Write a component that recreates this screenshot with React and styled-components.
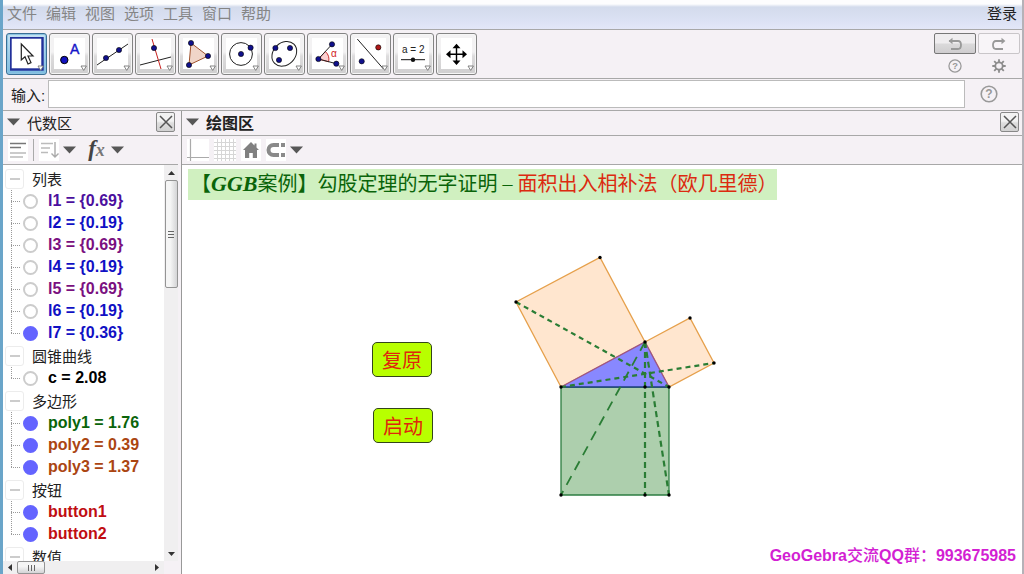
import React, { useCallback, useState } from "react";
import styled, { createGlobalStyle } from "styled-components";

const MENUS = ["文件", "编辑", "视图", "选项", "工具", "窗口", "帮助"];

const GROUPS = [
  {
    title: "列表",
    items: [
      { id: "l1", text: "l1 = {0.69}", color: "#4b0f9e", shown: false },
      { id: "l2", text: "l2 = {0.19}", color: "#1010c4", shown: false },
      { id: "l3", text: "l3 = {0.69}", color: "#7a1080", shown: false },
      { id: "l4", text: "l4 = {0.19}", color: "#1010c4", shown: false },
      { id: "l5", text: "l5 = {0.69}", color: "#7a1080", shown: false },
      { id: "l6", text: "l6 = {0.19}", color: "#1010c4", shown: false },
      { id: "l7", text: "l7 = {0.36}", color: "#1010c4", shown: true },
    ],
  },
  {
    title: "圆锥曲线",
    items: [{ id: "c", text: "c = 2.08", color: "#000000", shown: false }],
  },
  {
    title: "多边形",
    items: [
      { id: "poly1", text: "poly1 = 1.76", color: "#0a640a", shown: true },
      { id: "poly2", text: "poly2 = 0.39", color: "#ab4512", shown: true },
      { id: "poly3", text: "poly3 = 1.37", color: "#ab4512", shown: true },
    ],
  },
  {
    title: "按钮",
    items: [
      { id: "button1", text: "button1", color: "#c00d12", shown: true },
      { id: "button2", text: "button2", color: "#c00d12", shown: true },
    ],
  },
  { title: "数值", items: [] },
];

const Dot = ({ x, y, fill = "#10108c" }) => (
  <circle cx={x} cy={y} r="2.6" fill={fill} stroke="#000" strokeWidth="0.6" />
);

const TOOLS = [
  {
    name: "移动",
    icon: (
      <path
        d="M10.3 6V22L14 18.7L17 26L20 24.6L17 18H22Z"
        fill="#fff"
        stroke="#222"
        strokeWidth="1.2"
      />
    ),
  },
  {
    name: "描点",
    icon: (
      <>
        <circle cx="10.3" cy="22" r="3.7" fill="#1212c0" stroke="#000" />
        <text x="16" y="16" fontSize="14" fill="#1414c8" stroke="#1414c8" strokeWidth="0.4">
          A
        </text>
      </>
    ),
  },
  {
    name: "直线",
    icon: (
      <>
        <path d="M0 27L31 6" stroke="#222" />
        <Dot x={9} y={20} />
        <Dot x={22} y={12} />
      </>
    ),
  },
  {
    name: "垂线",
    icon: (
      <>
        <path d="M0 27L31 19" stroke="#222" />
        <path d="M12 1L21 31" stroke="#c8201e" />
        <Dot x={14} y={10} />
      </>
    ),
  },
  {
    name: "多边形",
    icon: (
      <>
        <path d="M8 5L25 18L6 27Z" fill="#f0d5c8" stroke="#a0522d" />
        <Dot x={8} y={5} />
        <Dot x={25} y={18} />
        <Dot x={6} y={27} />
      </>
    ),
  },
  {
    name: "圆",
    icon: (
      <>
        <circle cx="15" cy="16" r="11.4" fill="none" stroke="#222" />
        <Dot x={15} y={16} />
        <Dot x={24.6} y={9.7} />
      </>
    ),
  },
  {
    name: "椭圆",
    icon: (
      <>
        <ellipse
          cx="15.3"
          cy="15.8"
          rx="13.6"
          ry="11"
          transform="rotate(-45 15.3 15.8)"
          fill="none"
          stroke="#222"
        />
        <Dot x={6.4} y={10} />
        <Dot x={21} y={10} />
        <Dot x={10} y={22} />
      </>
    ),
  },
  {
    name: "角度",
    icon: (
      <>
        <path d="M6.4 21L13.4 13.6A10.5 10.5 0 0 1 16.6 23.8Z" fill="#fbd0d0" stroke="#d03030" />
        <path d="M20 6.3L6.4 21L24.3 25.7" fill="none" stroke="#222" />
        <Dot x={20} y={6.3} />
        <Dot x={6.4} y={21} />
        <Dot x={24.3} y={25.7} />
        <text x="19" y="19" fontSize="10" fill="#d02020">
          α
        </text>
      </>
    ),
  },
  {
    name: "对称",
    icon: (
      <>
        <path d="M2.3 1L28.5 31" stroke="#222" />
        <Dot x={23.3} y={9.4} fill="#b01818" />
        <Dot x={6.7} y={23.3} />
      </>
    ),
  },
  {
    name: "滑动条",
    icon: (
      <>
        <text x="4" y="15" fontSize="10" fill="#222">
          a = 2
        </text>
        <path d="M3 21.7H27" stroke="#111" />
        <circle cx="15" cy="21.7" r="2.2" fill="#111" />
      </>
    ),
  },
  {
    name: "移动视图",
    icon: (
      <>
        <path d="M7 16.3H24M15.5 8V25" stroke="#000" strokeWidth="1.4" />
        <path
          d="M5 16.3L9.5 12.3V20.3ZM26 16.3L21.5 12.3V20.3ZM15.5 5.8L11.5 10.3H19.5ZM15.5 27L11.5 22.5H19.5Z"
          fill="#000"
        />
      </>
    ),
  },
];

const POINTS = [
  [561, 387],
  [669, 387],
  [645, 342],
  [561, 495],
  [669, 495],
  [516, 302],
  [600, 257.5],
  [690, 318],
  [714, 363],
  [645, 387],
  [645, 495],
];

const CloseButton = () => (
  <Close aria-label="关闭">
    <svg width="14" height="14" viewBox="0 0 14 14">
      <path d="M1 1L13 13M13 1L1 13" stroke="#555" strokeWidth="1.5" />
    </svg>
  </Close>
);

const Caret = () => (
  <svg width="13" height="8" viewBox="0 0 13 8">
    <path d="M0 0.5H13L6.5 7.5Z" fill="#575757" />
  </svg>
);

const HelpIcon = ({ size }) => (
  <svg width={size} height={size} viewBox="0 0 18 18">
    <circle cx="9" cy="9" r="7.8" fill="none" stroke="#999" strokeWidth="1.6" />
    <text x="9" y="13" textAnchor="middle" fontSize="12" fontWeight="bold" fill="#999">
      ?
    </text>
  </svg>
);

const GearIcon = () => (
  <svg width="14" height="14" viewBox="0 0 14 14">
    <g stroke="#8c8c8c" strokeWidth="1.8" fill="none">
      <circle cx="7" cy="7" r="3.7" />
      <path d="M7 0.3V3M7 11V13.7M0.3 7H3M11 7H13.7M2.2 2.2L4.2 4.2M9.8 9.8L11.8 11.8M11.8 2.2L9.8 4.2M4.2 9.8L2.2 11.8" />
    </g>
  </svg>
);

const Construction = () => (
  <Figure viewBox="510 252 210 250" width="210" height="250">
    <path d="M561 387L516 302L600 257.5L645 342Z" fill="#ffe6cf" stroke="#e6a04b" strokeWidth="1.3" />
    <path d="M645 342L690 318L714 363L669 387Z" fill="#ffe6cf" stroke="#e6a04b" strokeWidth="1.3" />
    <path d="M561 387H669V495H561Z" fill="#adcfad" stroke="#2d7d41" strokeWidth="1.3" />
    <path d="M561 387L645 342L669 387Z" fill="#8888ff" />
    <path d="M561 387L645 342L669 387" fill="none" stroke="#9b5488" strokeWidth="1.3" />
    <path d="M561 387H669" stroke="#1c3f7c" strokeWidth="1.3" />
    <g stroke="#2a7d35" strokeWidth="2.2" fill="none">
      <path d="M516 302L669 387" strokeDasharray="5 4" />
      <path d="M561 387L714 363" strokeDasharray="5 4" />
      <path d="M645 342V495" strokeDasharray="6 4" />
      <path d="M645 342L669 495" strokeDasharray="6 4" />
      <path d="M645 342L561 495" strokeDasharray="10 7" strokeWidth="1.8" />
    </g>
    {POINTS.map(([x, y]) => (
      <circle key={`${x}-${y}`} cx={x} cy={y} r="1.7" fill="#000" />
    ))}
  </Figure>
);

const App = () => {
  const [tool, setTool] = useState(TOOLS[0].name);
  const [command, setCommand] = useState("");
  const [shown, setShown] = useState(() =>
    Object.fromEntries(GROUPS.flatMap((g) => g.items.map((i) => [i.id, i.shown])))
  );

  const onToggle = useCallback((id) => {
    setShown((prev) => ({ ...prev, [id]: !prev[id] }));
  }, []);

  return (
    <>
      <GlobalStyle />
      <Window>
        <MenuBar>
          {MENUS.map((menu) => (
            <MenuButton key={menu}>{menu}</MenuButton>
          ))}
          <LoginButton>登录</LoginButton>
        </MenuBar>

        <ToolBar>
          <Tools>
            {TOOLS.map(({ name, icon }) => (
              <ToolButton
                key={name}
                aria-label={name}
                $active={tool === name}
                onClick={() => setTool(name)}
              >
                <svg width="34" height="34" viewBox="-1 -1 34 34">
                  <rect
                    x={tool === name ? -0.5 : 0}
                    y={tool === name ? -0.5 : 0}
                    width={tool === name ? 32 : 31}
                    height={tool === name ? 32 : 31}
                    fill="#fff"
                    stroke={tool === name ? "#22309a" : "none"}
                    strokeWidth="2.4"
                  />
                  {icon}
                  <path d="M27 28H32.4L29.7 32.4Z" fill="#fff" stroke="#777" strokeWidth="0.9" />
                </svg>
              </ToolButton>
            ))}
          </Tools>
          <Actions>
            <ActionButton aria-label="撤销">
              <svg width="14" height="14" viewBox="0 0 14 14" fill="none">
                <path d="M1 4H10Q13 4 13 8T10 12H3" stroke="#999" strokeWidth="1.8" />
                <path d="M4.5 0.8L0.6 4L4.5 7.2Z" fill="#999" />
              </svg>
            </ActionButton>
            <ActionButton aria-label="重做" $plain>
              <svg width="14" height="14" viewBox="0 0 14 14" fill="none">
                <path d="M12 4H4Q1 4 1 8T4 12H11" stroke="#999" strokeWidth="1.8" />
                <path d="M9.5 0.8L13.4 4L9.5 7.2Z" fill="#999" />
              </svg>
            </ActionButton>
            <IconButton aria-label="帮助">
              <HelpIcon size={14} />
            </IconButton>
            <IconButton aria-label="设置">
              <GearIcon />
            </IconButton>
          </Actions>
        </ToolBar>

        <InputBar>
          <label htmlFor="command">输入:</label>
          <CommandInput
            id="command"
            value={command}
            onChange={(e) => setCommand(e.target.value)}
          />
          <IconButton aria-label="输入帮助">
            <HelpIcon size={18} />
          </IconButton>
        </InputBar>

        <Panels>
          <AlgebraPanel>
            <PanelHeader>
              <Caret />
              <PanelTitle>代数区</PanelTitle>
              <CloseButton />
            </PanelHeader>
            <StyleBar>
              <StyleButton aria-label="辅助对象">
                <svg width="20" height="22" viewBox="0 0 20 22">
                  <rect width="20" height="22" fill="#fff" />
                  <path d="M2 4.5H18M2 8.5H13" stroke="#777" strokeWidth="1.4" />
                  <path d="M2 14H18M2 18H15" stroke="#bbb" strokeWidth="1.4" />
                </svg>
              </StyleButton>
              <Divider />
              <StyleButton aria-label="排序">
                <svg width="20" height="22" viewBox="0 0 20 22">
                  <rect width="20" height="22" fill="#fff" />
                  <path d="M2 4.5H14M2 9H11M2 13.5H9" stroke="#bbb" strokeWidth="1.4" />
                  <path d="M16 3V18M12.5 14.5L16 18L19.5 14.5" fill="none" stroke="#aaa" strokeWidth="1.4" />
                </svg>
                <Caret />
              </StyleButton>
              <StyleButton aria-label="描述">
                <Fx>
                  f<small>x</small>
                </Fx>
                <Caret />
              </StyleButton>
            </StyleBar>
            <TreeArea>
              <Tree>
                {GROUPS.map(({ title, items }) => (
                  <li key={title}>
                    <GroupTitle>
                      <Expander aria-label={title} />
                      {title}
                    </GroupTitle>
                    <Items>
                      {items.map(({ id, text, color }) => (
                        <Item key={id}>
                          <Marble
                            id={id}
                            type="checkbox"
                            checked={shown[id]}
                            onChange={() => onToggle(id)}
                          />
                          <ItemLabel htmlFor={id} $color={color}>
                            {text}
                          </ItemLabel>
                        </Item>
                      ))}
                    </Items>
                  </li>
                ))}
              </Tree>
              <VerticalScroll>
                <Arrow viewBox="0 0 7 4">
                  <path d="M0 4L3.5 0L7 4Z" />
                </Arrow>
                <VerticalThumb>
                  <svg width="6" height="7" viewBox="0 0 6 7">
                    <path d="M0 0.5H6M0 3.5H6M0 6.5H6" stroke="#666" />
                  </svg>
                </VerticalThumb>
                <Spacer />
                <Arrow viewBox="0 0 7 4">
                  <path d="M0 0L3.5 4L7 0Z" />
                </Arrow>
              </VerticalScroll>
            </TreeArea>
            <HorizontalScroll>
              <Arrow viewBox="0 0 4 7" $side>
                <path d="M4 0L0 3.5L4 7Z" />
              </Arrow>
              <HorizontalThumb>
                <svg width="7" height="6" viewBox="0 0 7 6">
                  <path d="M0.5 0V6M3.5 0V6M6.5 0V6" stroke="#666" />
                </svg>
              </HorizontalThumb>
              <Spacer />
              <Arrow viewBox="0 0 4 7" $side>
                <path d="M0 0L4 3.5L0 7Z" />
              </Arrow>
            </HorizontalScroll>
          </AlgebraPanel>

          <GraphicsPanel>
            <PanelHeader>
              <Caret />
              <PanelTitle $bold>绘图区</PanelTitle>
              <CloseButton />
            </PanelHeader>
            <StyleBar>
              <StyleButton aria-label="坐标轴">
                <svg width="22" height="22" viewBox="0 0 22 22">
                  <rect width="22" height="22" fill="#fff" />
                  <path d="M3.5 0V22M0 18.5H22" stroke="#aaa" strokeWidth="1.2" />
                </svg>
              </StyleButton>
              <StyleButton aria-label="网格">
                <svg width="22" height="22" viewBox="0 0 22 22">
                  <rect width="22" height="22" fill="#fff" />
                  <path
                    d="M3.5 0V22M7.5 0V22M11.5 0V22M15.5 0V22M19.5 0V22M0 3.5H22M0 7.5H22M0 11.5H22M0 15.5H22M0 19.5H22"
                    stroke="#d6d6d6"
                  />
                </svg>
              </StyleButton>
              <StyleButton aria-label="标准视图">
                <svg width="20" height="22" viewBox="0 0 20 22">
                  <rect width="20" height="22" fill="#fff" />
                  <path
                    d="M10 3L2 11H4V19H8.2V14H11.8V19H16V11H18L15.5 8.5V4.5H13.5V6.5Z"
                    fill="#808080"
                  />
                </svg>
              </StyleButton>
              <StyleButton aria-label="吸附">
                <svg width="20" height="22" viewBox="0 0 20 22">
                  <rect width="20" height="22" fill="#fff" />
                  <path d="M13 6H7.5A5 5 0 0 0 7.5 16H13" fill="none" stroke="#8a8a8a" strokeWidth="4" />
                  <path d="M15 4H19V8H15ZM15 14H19V18H15Z" fill="#8a8a8a" />
                </svg>
                <Caret />
              </StyleButton>
            </StyleBar>
            <Canvas>
              <Banner>
                【<em>GGB</em>案例】勾股定理的无字证明 – <span>面积出入相补法（欧几里德）</span>
              </Banner>
              <CanvasButton $left={190} $top={178}>
                复原
              </CanvasButton>
              <CanvasButton $left={191} $top={244}>
                启动
              </CanvasButton>
              <Construction />
              <Contact>
                GeoGebra<span>交流</span>QQ<span>群：</span>993675985
              </Contact>
            </Canvas>
          </GraphicsPanel>
        </Panels>
      </Window>
    </>
  );
};

export default App;

const GlobalStyle = createGlobalStyle`
  * {
    box-sizing: border-box;
  }
  body {
    margin: 0;
    font-family: "Liberation Sans", "Noto Sans CJK SC", sans-serif;
    font-size: 15px;
    color: #222;
  }
  button {
    padding: 0;
    border: 0;
    background: none;
    font: inherit;
    color: inherit;
  }
  ul {
    margin: 0;
    padding: 0;
    list-style: none;
  }
  svg {
    flex: none;
    display: block;
  }
`;

const Window = styled.div`
  display: flex;
  flex-direction: column;
  height: 100vh;
  overflow: hidden;
  background-color: #f5f1f5;
  border-left: 3px solid #6aa5c9;
  border-right: 2px solid #b5b2b8;
`;

const MenuBar = styled.nav`
  display: flex;
  align-items: center;
  gap: 9px;
  height: 30px;
  padding: 0 5px 4px 4px;
  border-bottom: 1px solid #a8a8a8;
  background: linear-gradient(#fdfdfe 4px, #d3dbec 7px, #dbe1f3 20px, #e3e7f8);
`;

const MenuButton = styled.button`
  color: #858585;
`;

const LoginButton = styled(MenuButton)`
  margin-left: auto;
  color: #222;
`;

const ToolBar = styled.div`
  display: flex;
  justify-content: space-between;
  height: 49px;
  padding: 3px 2px 0 3px;
  border-bottom: 1px solid #a8a8a8;
`;

const Tools = styled.div`
  display: flex;
  gap: 2px;
`;

const ToolButton = styled.button`
  display: flex;
  align-items: center;
  justify-content: center;
  width: 41px;
  height: 42px;
  padding-left: 1px;
  border: 1px solid ${(props) => (props.$active ? "#3a6f95" : "#848484")};
  border-radius: 3px;
  background: ${(props) =>
    props.$active
      ? "linear-gradient(#c5e2f2, #7dbce0)"
      : "linear-gradient(#f3f2f3 45%, #dddcdd 55%, #cfcecf)"};
  box-shadow: inset 0 0 0 1px ${(props) => (props.$active ? "#8cc4e2" : "#f6f6f6")};
`;

const Actions = styled.div`
  display: grid;
  grid-template-columns: 42px 42px;
  grid-template-rows: 21px 24px;
  column-gap: 2px;
`;

const ActionButton = styled.button`
  display: flex;
  align-items: center;
  justify-content: center;
  border: 1px solid ${(props) => (props.$plain ? "#c9c6c9" : "#777")};
  border-radius: 2px;
  background: ${(props) =>
    props.$plain ? "#f8f5f8" : "linear-gradient(#efedef 45%, #dad9da 55%, #cfcdcf)"};
`;

const IconButton = styled.button`
  display: flex;
  align-items: center;
  justify-content: center;
`;

const InputBar = styled.div`
  display: flex;
  align-items: center;
  height: 32px;
  padding: 0 0 1px 8px;
  border-bottom: 1px solid #a8a8a8;

  ${IconButton} {
    width: 57px;
    padding-right: 9px;
  }
`;

const CommandInput = styled.input`
  flex: 1;
  min-width: 0;
  height: 28px;
  margin-left: 3px;
  padding: 0 6px;
  border: 1px solid #bbb;
  background-color: #fff;
  font: inherit;
`;

const Panels = styled.main`
  flex: 1;
  display: grid;
  grid-template-columns: 175px 1fr;
  column-gap: 3px;
  min-height: 0;
`;

const AlgebraPanel = styled.section`
  display: flex;
  flex-direction: column;
  min-height: 0;
`;

const GraphicsPanel = styled(AlgebraPanel)`
  border-left: 1px solid #999;
`;

const PanelHeader = styled.header`
  display: flex;
  align-items: center;
  gap: 7px;
  height: 25px;
  padding: 0 3px 2px 4px;
  border-bottom: 1px solid #a8a8a8;
`;

const PanelTitle = styled.h2`
  flex: 1;
  margin: 0;
  font-size: ${(props) => (props.$bold ? 16 : 15)}px;
  font-weight: ${(props) => (props.$bold ? 700 : 400)};
`;

const Close = styled.button`
  display: flex;
  align-items: center;
  justify-content: center;
  width: 19px;
  height: 20px;
  border: 1px solid #888;
  border-radius: 2px;
  background: linear-gradient(#f2f2f2 45%, #dedede 55%, #d2d2d2);
`;

const StyleBar = styled.div`
  display: flex;
  align-items: center;
  gap: 5px;
  height: 29px;
  padding: 0 0 1px 5px;
  border-bottom: 1px solid #a8a8a8;
`;

const StyleButton = styled.button`
  display: flex;
  align-items: center;
  gap: 4px;
`;

const Divider = styled.span`
  width: 1px;
  height: 22px;
  background-color: #aaa;
`;

const Fx = styled.span`
  width: 26px;
  padding-left: 5px;
  font: italic bold 23px/22px "Liberation Serif", serif;
  color: #444;

  small {
    font-size: 18px;
    color: #777;
  }
`;

const TreeArea = styled.div`
  flex: 1;
  display: flex;
  min-height: 0;
  background-color: #fff;
`;

const Tree = styled.ul`
  flex: 1;
  padding-top: 2px;
  overflow: hidden;
`;

const GroupTitle = styled.div`
  display: flex;
  align-items: center;
  gap: 8px;
  height: 23px;
  padding-left: 2px;
`;

const Expander = styled.button`
  display: flex;
  align-items: center;
  justify-content: center;
  width: 19px;
  height: 20px;
  border: 1px solid #ececec;
  border-radius: 3px;

  &::before {
    content: "";
    width: 10px;
    height: 2px;
    background-color: #ccc;
  }
`;

const Items = styled.ul`
  padding-left: 8px;
`;

const Item = styled.li`
  display: flex;
  align-items: center;
  height: 22px;
  /* dotted branch of the tree */
  background:
    repeating-linear-gradient(90deg, #999 0 1px, transparent 1px 2px) 0 11px / 10px 1px no-repeat,
    repeating-linear-gradient(#999 0 1px, transparent 1px 2px) 0 0 / 1px 100% no-repeat;

  &:last-child {
    background-size: 10px 1px, 1px 11px;
  }
`;

const Marble = styled.input`
  appearance: none;
  width: 15px;
  height: 15px;
  margin: 0 10px 0 12px;
  border: 2px solid #ccc;
  border-radius: 50%;
  background-color: #fff;

  &:checked {
    border-color: #6464ff;
    background-color: #6464ff;
  }
`;

const ItemLabel = styled.label`
  font-size: 16px;
  font-weight: 700;
  color: ${(props) => props.$color};
`;

const VerticalScroll = styled.div`
  display: flex;
  flex-direction: column;
  align-items: center;
  width: 14px;
  background-color: #f0eff0;
`;

const Arrow = styled.svg`
  width: ${(props) => (props.$side ? 4 : 7)}px;
  height: ${(props) => (props.$side ? 7 : 4)}px;
  margin: ${(props) => (props.$side ? "0 5px" : "6px 0 5px")};
  fill: #333;
`;

const Spacer = styled.span`
  flex: 1;
`;

const VerticalThumb = styled.div`
  display: flex;
  align-items: center;
  justify-content: center;
  width: 13px;
  height: 108px;
  border: 1px solid #949494;
  border-radius: 2px;
  background: linear-gradient(90deg, #f5f5f5 40%, #d4d4d6);
`;

const HorizontalScroll = styled(VerticalScroll)`
  flex-direction: row;
  width: 161px;
  height: 13px;
`;

const HorizontalThumb = styled(VerticalThumb)`
  width: 28px;
  height: 13px;
  background: linear-gradient(#f5f5f5 40%, #d4d4d6);
`;

const Canvas = styled.div`
  position: relative;
  flex: 1;
  min-height: 0;
  padding: 4px 6px;
  background-color: #fff;
`;

const Banner = styled.h1`
  width: fit-content;
  margin: 0;
  padding-left: 3px;
  background-color: #d0f0c0;
  font: 20px/31px "Liberation Serif", "Noto Sans CJK SC", serif;
  white-space: nowrap;
  color: #0a640a;

  em {
    font-size: 22px;
    font-weight: 700;
    line-height: 20px;
  }
  span {
    color: #dc2a10;
  }
`;

const CanvasButton = styled.button`
  position: absolute;
  left: ${(props) => props.$left}px;
  top: ${(props) => props.$top - 1}px;
  padding: 4px 9px 0;
  border: 1px solid #33451a;
  border-radius: 5px;
  background-color: #b8ff00;
  font-size: 20px;
  line-height: 29px;
  color: #e0260c;
`;

const Figure = styled.svg`
  position: absolute;
  left: 328px;
  top: 87px;
`;

const Contact = styled.p`
  position: absolute;
  right: 6px;
  bottom: 8px;
  margin: 0;
  font-size: 16px;
  font-weight: 700;
  line-height: 20px;
  color: #d31fd3;

  span {
    font-weight: 500;
  }
`;
